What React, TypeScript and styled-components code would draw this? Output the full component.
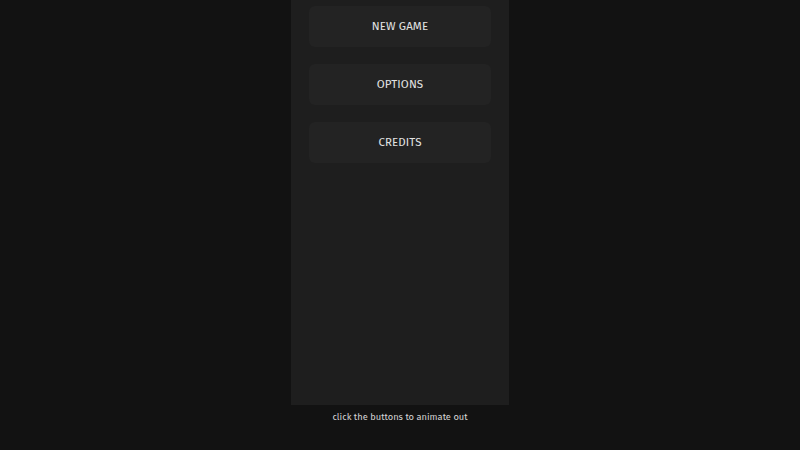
import React from 'react';
import styled, { createGlobalStyle } from 'styled-components';

const GlobalStyle = createGlobalStyle`
    html, body {
        margin: 0;
        padding: 0;
        background-color: #121212;
        font-family: 'Fira Sans', 'Open Sans', 'Noto Sans', sans-serif;
    }
`;

const Page = styled.div`
    display: flex;
    flex-direction: column;
    align-items: center;
    height: 450px;
`;

const Menu = styled.div`
    display: flex;
    flex-direction: column;
    gap: 17px;
    width: 218px;
    height: 405px;
    box-sizing: border-box;
    padding: 6px 18px;
    background-color: #1e1e1e;
`;

const MenuButton = styled.button`
    height: 41px;
    padding: 0 0 2px;
    border: none;
    border-radius: 6px;
    background-color: #232323;
    color: #e2e2e2;
    font-family: inherit;
    font-size: 11.5px;
    font-weight: 400;
    letter-spacing: 0.1px;
    text-transform: uppercase;
    cursor: pointer;
`;

const Hint = styled.p`
    margin: 6px 0 0;
    color: #d4d4d4;
    font-size: 9.3px;
`;

const items = ['New Game', 'Options', 'Credits'];

export default function App(): JSX.Element {
    return (
        <Page>
            <GlobalStyle />
            <Menu>
                {items.map((label) => (
                    <MenuButton key={label}>{label}</MenuButton>
                ))}
            </Menu>
            <Hint>click the buttons to animate out</Hint>
        </Page>
    );
}
